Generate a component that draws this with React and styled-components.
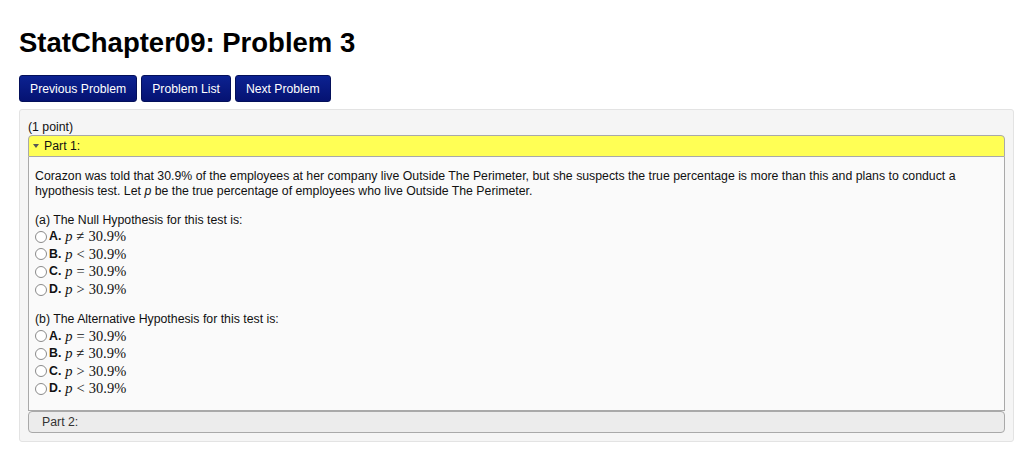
import styled, { createGlobalStyle } from 'styled-components';

const Global = createGlobalStyle`
	body {
		margin: 0;
		background: #fff;
		font-family: "Liberation Sans", Arial, sans-serif;
		color: #111;
	}
`

const Page = styled.div`
	padding: 0 10px 10px 19px;
`

const Title = styled.h1`
	margin: 0;
	padding-top: 27px;
	font-size: 27.5px;
	line-height: 31px;
	font-weight: bold;
	color: #000;
`

const Nav = styled.div`
	display: flex;
	gap: 4px;
	margin-top: 17px;
`

const NavButton = styled.button`
	height: 27px;
	padding: 0 10px;
	border: 1px solid #04105a;
	border-radius: 3px;
	background: linear-gradient(#0c2291, #051272);
	color: #fff;
	font-family: "Liberation Sans", Arial, sans-serif;
	font-size: 12.2px;
	cursor: pointer;
`

const Panel = styled.div`
	margin-top: 7px;
	background: #f5f5f5;
	border: 1px solid #e3e3e3;
	border-radius: 3px;
	padding: 10px 8px 8px 8px;
	font-size: 12.3px;
`

const Points = styled.div`
	line-height: 15px;
`

const PartHeader = styled.div`
	display: flex;
	align-items: center;
	gap: 5px;
	background: ${p => (p.$open ? '#ffff55' : '#ececec')};
	border: 1px solid #a9a9a9;
	border-radius: ${p => (p.$open ? '4px 4px 0 0' : '4px')};
	padding: 0 4px;
	padding-left: ${p => (p.$open ? '4px' : '13px')};
	color: ${p => (p.$open ? '#111' : '#333')};
	height: 20px;
`

const Caret = styled.span`
	width: 0;
	height: 0;
	border-left: 3px solid transparent;
	border-right: 3px solid transparent;
	border-top: 4px solid #555;
`

const PartBody = styled.div`
	background: #fafafa;
	border: 1px solid #a9a9a9;
	border-top: none;
	padding: 12px 6px 12px 6px;
	line-height: 15px;
`

const Para = styled.p`
	margin: 0 0 14px 0;
`

const Question = styled.div`
	margin-bottom: 14px;
	&:last-child {
		margin-bottom: 0;
	}
`

const Option = styled.label`
	display: flex;
	align-items: center;
	height: 17.6px;
`

const Radio = styled.span`
	width: 10px;
	height: 10px;
	border: 1px solid #8a8a8a;
	border-radius: 50%;
	background: #fff;
	margin-right: 2px;
	flex-shrink: 0;
`

const Letter = styled.b`
	margin-right: 4px;
`

const Math = styled.span`
	font-family: "Liberation Serif", "Times New Roman", serif;
	font-size: 14.5px;
`

const Var = styled.i`
	margin-right: 4px;
`

const Op = styled.span`
	margin-right: 4px;
`

const questions = [
	{
		label: '(a) The Null Hypothesis for this test is:',
		opts: [['A', '≠'], ['B', '<'], ['C', '='], ['D', '>']],
	},
	{
		label: '(b) The Alternative Hypothesis for this test is:',
		opts: [['A', '='], ['B', '≠'], ['C', '>'], ['D', '<']],
	},
]

const App = () => {
	return (
		<>
			<Global />
			<Page>
				<Title>StatChapter09: Problem 3</Title>
				<Nav>
					<NavButton>Previous Problem</NavButton>
					<NavButton>Problem List</NavButton>
					<NavButton>Next Problem</NavButton>
				</Nav>
				<Panel>
					<Points>(1 point)</Points>
					<PartHeader $open>
						<Caret />
						Part 1:
					</PartHeader>
					<PartBody>
						<Para>
							Corazon was told that 30.9% of the employees at her company live Outside The Perimeter, but she suspects the true percentage is more than this and plans to conduct a hypothesis test. Let <i>p</i> be the true percentage of employees who live Outside The Perimeter.
						</Para>
						{questions.map(q => (
							<Question key={q.label}>
								<div>{q.label}</div>
								{q.opts.map(([l, op]) => (
									<Option key={l}>
										<Radio />
										<Letter>{l}.</Letter>
										<Math>
											<Var>p</Var>
											<Op>{op}</Op>
											30.9%
										</Math>
									</Option>
								))}
							</Question>
						))}
					</PartBody>
					<PartHeader>Part 2:</PartHeader>
				</Panel>
			</Page>
		</>
	)
}

export default App;
